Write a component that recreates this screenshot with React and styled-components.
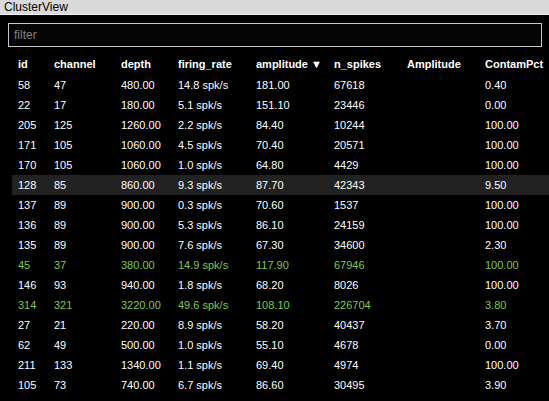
import styled, { createGlobalStyle } from "styled-components";

const GlobalStyle = createGlobalStyle`
  html, body {
    margin: 0;
    padding: 0;
    background: #000;
  }
  body {
    font-family: "Liberation Sans", Arial, sans-serif;
  }
`;

const columns = [
  { key: "id", label: "id", width: 36 },
  { key: "channel", label: "channel", width: 67 },
  { key: "depth", label: "depth", width: 57 },
  { key: "fr", label: "firing_rate", width: 78 },
  { key: "amp", label: "amplitude ▼", width: 78 },
  { key: "n", label: "n_spikes", width: 73 },
  { key: "Amp", label: "Amplitude", width: 78 },
  { key: "contam", label: "ContamPct", width: 70 },
];

const rows = [
  ["58", "47", "480.00", "14.8 spk/s", "181.00", "67618", "", "0.40"],
  ["22", "17", "180.00", "5.1 spk/s", "151.10", "23446", "", "0.00"],
  ["205", "125", "1260.00", "2.2 spk/s", "84.40", "10244", "", "100.00"],
  ["171", "105", "1060.00", "4.5 spk/s", "70.40", "20571", "", "100.00"],
  ["170", "105", "1060.00", "1.0 spk/s", "64.80", "4429", "", "100.00"],
  ["128", "85", "860.00", "9.3 spk/s", "87.70", "42343", "", "9.50", "selected"],
  ["137", "89", "900.00", "0.3 spk/s", "70.60", "1537", "", "100.00"],
  ["136", "89", "900.00", "5.3 spk/s", "86.10", "24159", "", "100.00"],
  ["135", "89", "900.00", "7.6 spk/s", "67.30", "34600", "", "2.30"],
  ["45", "37", "380.00", "14.9 spk/s", "117.90", "67946", "", "100.00", "good"],
  ["146", "93", "940.00", "1.8 spk/s", "68.20", "8026", "", "100.00"],
  ["314", "321", "3220.00", "49.6 spk/s", "108.10", "226704", "", "3.80", "good"],
  ["27", "21", "220.00", "8.9 spk/s", "58.20", "40437", "", "3.70"],
  ["62", "49", "500.00", "1.0 spk/s", "55.10", "4678", "", "0.00"],
  ["211", "133", "1340.00", "1.1 spk/s", "69.40", "4974", "", "100.00"],
  ["105", "73", "740.00", "6.7 spk/s", "86.60", "30495", "", "3.90"],
];

export default function App() {
  return (
    <>
      <GlobalStyle />
      <Window>
        <TitleBar>ClusterView</TitleBar>
        <Body>
          <FilterBox>
            <FilterInput placeholder="filter" />
          </FilterBox>
          <Table>
            <colgroup>
              {columns.map((c) => (
                <col key={c.key} style={{ width: c.width }} />
              ))}
            </colgroup>
            <thead>
              <tr>
                {columns.map((c) => (
                  <HeadCell key={c.key}>{c.label}</HeadCell>
                ))}
              </tr>
            </thead>
            <tbody>
              {rows.map((r, i) => (
                <Row key={i} $selected={r[8] === "selected"} $good={r[8] === "good"}>
                  {r.slice(0, 8).map((v, j) => (
                    <Cell key={j}>{v}</Cell>
                  ))}
                </Row>
              ))}
            </tbody>
          </Table>
        </Body>
      </Window>
    </>
  );
}

const Window = styled.div`
  width: 549px;
  height: 401px;
  background: #000;
  overflow: hidden;
  display: flex;
  flex-direction: column;
`;

const TitleBar = styled.div`
  height: 14px;
  line-height: 15px;
  background: #dadada;
  border-bottom: 1px solid #f2f2f2;
  color: #000;
  font-size: 12px;
  padding-left: 4px;
`;

const Body = styled.div`
  padding-top: 8px;
`;

const FilterBox = styled.div`
  margin: 0 7px 0 8px;
  height: 22px;
  border: 1px solid #c8c8c8;
  background: #050505;
  display: flex;
  align-items: center;
`;

const FilterInput = styled.input`
  flex: 1;
  background: transparent;
  border: none;
  outline: none;
  color: #fff;
  font-family: "Liberation Sans", Arial, sans-serif;
  font-size: 12px;
  padding: 0 5px;
  &::placeholder {
    color: #808080;
  }
`;

const Table = styled.table`
  margin: 5px 0 0 12px;
  width: 537px;
  border-collapse: collapse;
  table-layout: fixed;
  font-size: 11px;
`;

const HeadCell = styled.th`
  height: 23px;
  padding: 0 0 0 6px;
  text-align: left;
  font-weight: bold;
  color: #fff;
  white-space: nowrap;
`;

const Row = styled.tr`
  height: 20px;
  background: ${(p) => (p.$selected ? "#222222" : "transparent")};
  color: ${(p) => (p.$good ? "#7ec84e" : "#ffffff")};
`;

const Cell = styled.td`
  padding: 0 0 0 6px;
  white-space: nowrap;
`;
